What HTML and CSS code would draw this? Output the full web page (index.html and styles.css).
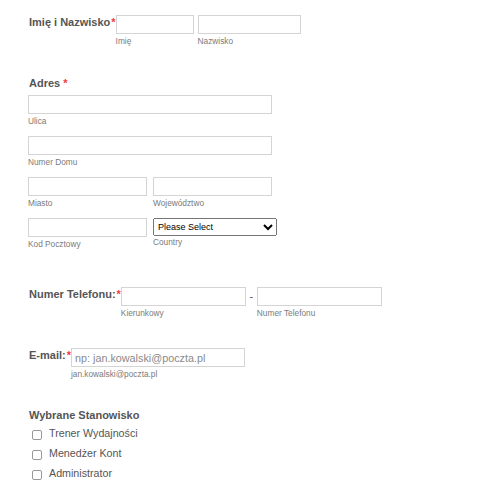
FILE: index.html
```html
<!DOCTYPE html>
<html lang="pl">
<head>
    <meta charset="UTF-8">
    <meta name="viewport" content="width=device-width, initial-scale=1.0">
    <title>Formularz</title>
    <link rel="stylesheet" href="styles.css">
</head>
<body>
    <form class="form">
        <div class="row">
            <label class="label">Imię i Nazwisko<span class="req">*</span></label>
            <div class="field">
                <input class="input first-name" type="text">
                <span class="sub">Imię</span>
            </div>
            <div class="field gap">
                <input class="input last-name" type="text">
                <span class="sub">Nazwisko</span>
            </div>
        </div>

        <div class="section">
            <div class="label block-label">Adres<span class="req wide">*</span></div>
            <div class="address">
                <div class="field span-2">
                    <input class="input full" type="text">
                    <span class="sub">Ulica</span>
                </div>
                <div class="field span-2">
                    <input class="input full" type="text">
                    <span class="sub">Numer Domu</span>
                </div>
                <div class="field">
                    <input class="input half" type="text">
                    <span class="sub">Miasto</span>
                </div>
                <div class="field">
                    <input class="input half" type="text">
                    <span class="sub">Województwo</span>
                </div>
                <div class="field">
                    <input class="input half" type="text">
                    <span class="sub">Kod Pocztowy</span>
                </div>
                <div class="field">
                    <select class="select">
                        <option>Please Select</option>
                    </select>
                    <span class="sub tight">Country</span>
                </div>
            </div>
        </div>

        <div class="row phone">
            <label class="label">Numer Telefonu:<span class="req">*</span></label>
            <div class="field">
                <input class="input phone-part" type="text">
                <span class="sub">Kierunkowy</span>
            </div>
            <span class="dash">-</span>
            <div class="field">
                <input class="input phone-part" type="text">
                <span class="sub">Numer Telefonu</span>
            </div>
        </div>

        <div class="row email">
            <label class="label">E-mail:<span class="req">*</span></label>
            <div class="field">
                <input class="input email-input" type="text" placeholder="np: jan.kowalski@poczta.pl">
                <span class="sub">jan.kowalski@poczta.pl</span>
            </div>
        </div>

        <div class="section positions">
            <div class="label">Wybrane Stanowisko</div>
            <ul class="options">
                <li class="option"><input class="check" type="checkbox"><span>Trener Wydajności</span></li>
                <li class="option"><input class="check" type="checkbox"><span>Menedżer Kont</span></li>
                <li class="option"><input class="check" type="checkbox"><span>Administrator</span></li>
            </ul>
        </div>
    </form>
</body>
</html>
```

FILE: styles.css
```css
body {
    margin: 0;
    background-color: #fff;
    color: #555;
    font-family: 'Liberation Sans', Arial, Helvetica, sans-serif;
}

.form {
    padding: 15px 0 0 29px;
}

.row {
    display: flex;
    align-items: flex-start;
}

.section {
    margin-top: 30px;
}

.label {
    font-size: 11px;
    font-weight: bold;
    line-height: 13px;
    color: #555;
    white-space: nowrap;
    padding-top: 1px;
}

.block-label {
    margin-bottom: 5px;
}

.req {
    color: #f23a3c;
    margin-left: 1px;
}

.req.wide {
    margin-left: 3px;
}

.field {
    display: flex;
    flex-direction: column;
}

.field.gap {
    margin-left: 4px;
}

.input {
    box-sizing: border-box;
    height: 19px;
    margin: 0;
    padding: 0 3px;
    border: 1px solid #d4d4d4;
    border-radius: 0;
    background: #fff;
    font-family: inherit;
    font-size: 10.8px;
    color: #333;
}

.input::placeholder {
    color: #8a8a8a;
}

.first-name {
    width: 78px;
}

.last-name {
    width: 103px;
}

.sub {
    display: block;
    margin-top: 2px;
    font-size: 8.3px;
    line-height: 10px;
    color: #7a7a7a;
    white-space: nowrap;
}

.sub.tight {
    margin-top: 1px;
}

.address {
    display: grid;
    grid-template-columns: 119px 124px;
    column-gap: 6px;
    row-gap: 10px;
    margin-left: -1px;
}

.span-2 {
    grid-column: span 2;
}

.full {
    width: 244px;
}

.half {
    width: 119px;
}

.select {
    box-sizing: border-box;
    width: 124px;
    height: 18px;
    margin: 0;
    font-family: inherit;
    font-size: 9px;
    color: #000;
}

.phone {
    margin-top: 38px;
}

.phone-part {
    width: 125px;
}

.dash {
    width: 11px;
    line-height: 19px;
    text-align: center;
    font-size: 11px;
    color: #555;
}

.email {
    margin-top: 30px;
}

.email-input {
    width: 174px;
}

.positions {
    margin-top: 29px;
}

.options {
    list-style: none;
    margin: 1px 0 0;
    padding: 0;
}

.option {
    display: flex;
    align-items: center;
    height: 20px;
    font-size: 10.7px;
    color: #555;
}

.check {
    appearance: none;
    box-sizing: border-box;
    width: 10px;
    height: 10px;
    margin: 4px 7px 0 3px;
    border: 1px solid #999;
    border-radius: 2px;
    background: #fff;
}
```
